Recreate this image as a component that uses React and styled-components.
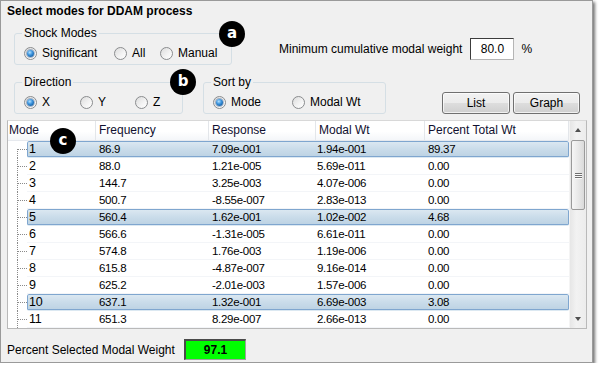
import React from 'react';
import styled, { createGlobalStyle } from 'styled-components';

const Global = createGlobalStyle`
  html, body { margin: 0; padding: 0; background: #ffffff; }
  * { box-sizing: border-box; }
`;

const Window = styled.div`
  position: relative;
  width: 593px;
  height: 363px;
  background: #f0f0f0;
  border: 1px solid #9a9a9a;
  box-shadow: 2px 2px 3px rgba(0,0,0,0.55);
  font-family: "Liberation Sans", Arial, sans-serif;
  font-size: 12px;
  color: #000;
  display: flex;
  flex-direction: column;
`;

const Title = styled.div`
  height: 20px;
  line-height: 20px;
  padding-left: 6px;
  font-weight: bold;
  font-size: 12px;
`;

const Row = styled.div`
  display: flex;
  align-items: ${p => p.$align || 'flex-start'};
  margin-top: ${p => p.$mt || 0}px;
  padding-left: 13px;
`;

const Group = styled.fieldset`
  margin: 0 ${p => p.$mr || 0}px 0 0;
  padding: 0;
  width: ${p => p.$w}px;
  border: 1px solid #d5dfe5;
  border-radius: 3px;
  min-inline-size: 0;
`;

const Legend = styled.legend`
  margin-left: 7px;
  padding: 0 2px;
  font-size: 12px;
  line-height: 14px;
`;

const RadioRow = styled.div`
  display: flex;
  align-items: center;
  height: 22px;
  margin-top: 2px;
  padding-left: 9px;
`;

const RadioItem = styled.label`
  display: flex;
  align-items: center;
  width: ${p => (p.$w ? p.$w + 'px' : 'auto')};
  flex: none;
  gap: 5px;
  white-space: nowrap;
`;

const RadioDot = styled.span`
  width: 13px;
  height: 13px;
  border-radius: 50%;
  border: 1px solid #8a8c8e;
  background: linear-gradient(135deg, #dcdcdc 0%, #f4f4f4 60%, #ffffff 100%);
  display: flex;
  align-items: center;
  justify-content: center;
  flex: none;
  &::after {
    content: '';
    width: 7px;
    height: 7px;
    border-radius: 50%;
    display: ${p => (p.$on ? 'block' : 'none')};
    background: radial-gradient(circle at 40% 35%, #b4e2ff 0%, #3e95de 40%, #0f5699 85%);
    box-shadow: 0 0 0 1px rgba(30, 70, 120, 0.35);
  }
`;

const Radio = ({ on, w, children }) => (
  <RadioItem $w={w}>
    <RadioDot $on={on} />
    <span>{children}</span>
  </RadioItem>
);

const MinWeight = styled.div`
  display: flex;
  align-items: center;
  margin-left: 47px;
  margin-top: 12px;
  height: 22px;
`;

const NumBox = styled.div`
  width: 44px;
  height: 22px;
  margin-left: 8px;
  background: #fff;
  border: 1px solid #b5b5b5;
  border-top-color: #3c3c3c;
  border-left-color: #3c3c3c;
  text-align: center;
  line-height: 20px;
  font-size: 12px;
`;

const Unit = styled.span`
  margin-left: 7px;
`;

const Buttons = styled.div`
  display: flex;
  gap: 3px;
  margin-left: auto;
  margin-right: 12px;
  align-self: flex-end;
`;

const Button = styled.button`
  width: ${p => p.$w}px;
  height: 22px;
  padding: 0;
  border: 1px solid #707070;
  border-radius: 3px;
  background: linear-gradient(to bottom, #f2f2f2 0%, #ebebeb 50%, #dddddd 51%, #cfcfcf 100%);
  font-family: "Liberation Sans", Arial, sans-serif;
  font-size: 12px;
  color: #000;
  box-shadow: inset 0 0 0 1px rgba(255,255,255,0.7);
`;

const Table = styled.div`
  display: flex;
  margin: 6px 0 0 6px;
  width: 580px;
  height: 209px;
  border: 1px solid #b9b9b9;
  border-top-color: #d8d8d8;
  background: #fff;
`;

const TableMain = styled.div`
  flex: 1;
  display: flex;
  flex-direction: column;
  overflow: hidden;
`;

const cols = '88px 113px 107px 109px 1fr';

const Header = styled.div`
  display: grid;
  grid-template-columns: ${cols};
  height: 20px;
  background: linear-gradient(to bottom, #ffffff 0%, #ffffff 55%, #f4f6f9 100%);
  border-bottom: 1px solid #e6e9ee;
`;

const HeadCell = styled.div`
  padding-left: ${p => p.$pl || 3}px;
  line-height: 19px;
  font-size: 12px;
  color: #101030;
  border-right: 1px solid #e3e6ea;
  white-space: nowrap;
`;

const DataRow = styled.div`
  display: flex;
  height: 17px;
`;

const Gutter = styled.div`
  position: relative;
  width: 19px;
  flex: none;
  &::before {
    content: '';
    position: absolute;
    left: 9px;
    top: ${p => (p.$first ? '8px' : '0')};
    bottom: 0;
    border-left: 1px dotted #8a8a8a;
  }
  &::after {
    content: '';
    position: absolute;
    left: 9px;
    right: 0;
    top: 8px;
    border-top: 1px dotted #8a8a8a;
  }
`;

const RowBody = styled.div`
  flex: 1;
  display: grid;
  grid-template-columns: 69px 113px 107px 109px 1fr;
  align-items: center;
  font-size: 11.5px;
  letter-spacing: -0.3px;
  border-bottom: 1px solid ${p => (p.$sel ? 'transparent' : '#f3f5f8')};
  background: ${p => (p.$sel ? 'linear-gradient(to bottom, #dde9f2 0%, #cadcea 50%, #bcd2e3 100%)' : 'transparent')};
  box-shadow: ${p => (p.$sel ? 'inset 0 0 0 1px #7fa6cf' : 'none')};
  border-radius: ${p => (p.$sel ? '2px' : '0')};
`;

const Cell = styled.div`
  padding-left: ${p => p.$pl || 3}px;
  white-space: nowrap;
  font-size: ${p => (p.$big ? '12.5px' : 'inherit')};
`;

const Scrollbar = styled.div`
  width: 17px;
  flex: none;
  display: flex;
  flex-direction: column;
  align-items: center;
  background: linear-gradient(to right, #e6e6e6, #f2f2f2 40%, #ececec);
  border-left: 1px solid #f4f4f4;
`;

const Arrow = styled.div`
  height: 18px;
  width: 100%;
  display: flex;
  align-items: center;
  justify-content: center;
  &::after {
    content: '';
    border-left: 3.5px solid transparent;
    border-right: 3.5px solid transparent;
    ${p => (p.$up ? 'border-bottom: 4px solid #505050;' : 'border-top: 4px solid #505050;')}
  }
`;

const Thumb = styled.div`
  margin-top: 1px;
  width: 14px;
  height: 70px;
  border: 1px solid #9a9a9a;
  border-radius: 2px;
  background: linear-gradient(to right, #f6f6f6, #e9e9e9 50%, #dadada);
  display: flex;
  flex-direction: column;
  align-items: center;
  justify-content: center;
  gap: 1px;
`;

const Grip = styled.span`
  width: 7px;
  height: 1px;
  background: #6f6f6f;
  box-shadow: 0 1px 0 #fafafa;
`;

const Track = styled.div`
  flex: 1;
`;

const Footer = styled.div`
  display: flex;
  align-items: center;
  margin: 10px 0 0 6px;
  height: 21px;
`;

const FooterLabel = styled.span`
  width: 177px;
  font-size: 12px;
`;

const GreenBox = styled.div`
  width: 62px;
  height: 21px;
  background: #00ff00;
  border-style: solid;
  border-width: 2px 1px 1px 2px;
  border-color: #4a4a4a #a0a0a0 #a0a0a0 #4a4a4a;
  text-align: center;
  font-weight: bold;
  font-size: 12px;
  line-height: 18px;
`;

const Badge = styled.div`
  position: absolute;
  left: ${p => p.$x - 13}px;
  top: ${p => p.$y - 13}px;
  width: 26px;
  height: 26px;
  border-radius: 50%;
  background: #000;
  color: #fff;
  font-family: "DejaVu Sans", sans-serif;
  font-weight: bold;
  font-size: 15px;
  display: flex;
  align-items: center;
  justify-content: center;
  line-height: 1;
  padding-bottom: 2px;
`;

const rows = [
  [1, '86.9', '7.09e-001', '1.94e-001', '89.37', true],
  [2, '88.0', '1.21e-005', '5.69e-011', '0.00'],
  [3, '144.7', '3.25e-003', '4.07e-006', '0.00'],
  [4, '500.7', '-8.55e-007', '2.83e-013', '0.00'],
  [5, '560.4', '1.62e-001', '1.02e-002', '4.68', true],
  [6, '566.6', '-1.31e-005', '6.61e-011', '0.00'],
  [7, '574.8', '1.76e-003', '1.19e-006', '0.00'],
  [8, '615.8', '-4.87e-007', '9.16e-014', '0.00'],
  [9, '625.2', '-2.01e-003', '1.57e-006', '0.00'],
  [10, '637.1', '1.32e-001', '6.69e-003', '3.08', true],
  [11, '651.3', '8.29e-007', '2.66e-013', '0.00'],
];

export default function App() {
  return (
    <>
      <Global />
      <Window>
        <Title>Select modes for DDAM process</Title>
        <Row $mt={5}>
          <Group $w={218}>
            <Legend>Shock Modes</Legend>
            <RadioRow>
              <Radio on w={90}>Significant</Radio>
              <Radio w={46}>All</Radio>
              <Radio>Manual</Radio>
            </RadioRow>
          </Group>
          <MinWeight>
            <span>Minimum cumulative modal weight</span>
            <NumBox>80.0</NumBox>
            <Unit>%</Unit>
          </MinWeight>
        </Row>
        <Row $mt={10}>
          <Group $w={169} $mr={20}>
            <Legend>Direction</Legend>
            <RadioRow>
              <Radio on w={56}>X</Radio>
              <Radio w={55}>Y</Radio>
              <Radio>Z</Radio>
            </RadioRow>
          </Group>
          <Group $w={183}>
            <Legend>Sort by</Legend>
            <RadioRow>
              <Radio on w={79}>Mode</Radio>
              <Radio>Modal Wt</Radio>
            </RadioRow>
          </Group>
          <Buttons>
            <Button $w={68}>List</Button>
            <Button $w={67}>Graph</Button>
          </Buttons>
        </Row>
        <Table>
          <TableMain>
            <Header>
              <HeadCell $pl={1}>Mode</HeadCell>
              <HeadCell>Frequency</HeadCell>
              <HeadCell>Response</HeadCell>
              <HeadCell>Modal Wt</HeadCell>
              <HeadCell>Percent Total Wt</HeadCell>
            </Header>
            {rows.map(([m, f, r, w, p, sel], i) => (
              <DataRow key={m}>
                <Gutter $first={i === 0} />
                <RowBody $sel={!!sel}>
                  <Cell $pl={2} $big>{m}</Cell>
                  <Cell>{f}</Cell>
                  <Cell>{r}</Cell>
                  <Cell $pl={1}>{w}</Cell>
                  <Cell>{p}</Cell>
                </RowBody>
              </DataRow>
            ))}
          </TableMain>
          <Scrollbar>
            <Arrow $up />
            <Thumb>
              <Grip />
              <Grip />
              <Grip />
            </Thumb>
            <Track />
            <Arrow />
          </Scrollbar>
        </Table>
        <Footer>
          <FooterLabel>Percent Selected Modal Weight</FooterLabel>
          <GreenBox>97.1</GreenBox>
        </Footer>
        <Badge $x={231} $y={33}>a</Badge>
        <Badge $x={182} $y={81}>b</Badge>
        <Badge $x={62} $y={140}>c</Badge>
      </Window>
    </>
  );
}
